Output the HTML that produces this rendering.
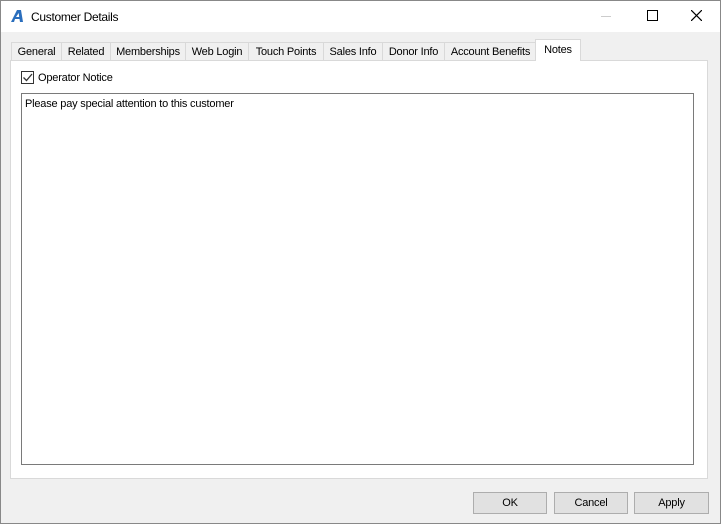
<!DOCTYPE html><html><head><style>
body{margin:0;width:721px;height:524px;overflow:hidden;font-family:"Liberation Sans",sans-serif;font-size:11px;letter-spacing:-0.2px;color:#000}
.win{position:absolute;left:0;top:0;width:719px;height:522px;border:1px solid #888;background:#f0f0f0}
.title{position:absolute;left:0;top:0;width:719px;height:31px;background:#fff}
.tab{position:absolute;top:41px;height:17px;border:1px solid #d9d9d9;border-bottom:none;background:#f0f0f0;line-height:19px;text-align:center;box-sizing:content-box}
.panel{position:absolute;left:9px;top:59px;width:696px;height:417px;background:#fff;border:1px solid #d9d9d9}
.btn{position:absolute;top:491px;height:20px;border:1px solid #adadad;background:#e1e1e1;text-align:center;line-height:21px}
</style></head><body><div class="win">
<div class="title">
<svg style="position:absolute;left:9px;top:8px" width="16" height="14" viewBox="0 0 16 14"><path d="M1 13 L7 1 L11 1 L13 13 L10 13 L9.5 10 L5 10 L4 13Z M6 8 L9.2 8 L8.7 4Z" fill="#2a6ebd" fill-rule="evenodd"/></svg>
<div style="position:absolute;left:30px;top:9px;font-size:12px;letter-spacing:-0.3px">Customer Details</div>
<div style="position:absolute;left:600px;top:15px;width:10px;height:1px;background:#ccc"></div>
<div style="position:absolute;left:646px;top:9px;width:9px;height:9px;border:1px solid #000"></div>
<svg style="position:absolute;left:690px;top:9px" width="11" height="11"><path d="M0 0L11 11M11 0L0 11" stroke="#000" stroke-width="1.2"/></svg>
</div>
<div class="panel"></div>
<div class="tab" style="left:10px;width:49px">General</div>
<div class="tab" style="left:60px;width:48px">Related</div>
<div class="tab" style="left:109px;width:74px">Memberships</div>
<div class="tab" style="left:184px;width:62px">Web Login</div>
<div class="tab" style="left:247px;width:74px">Touch Points</div>
<div class="tab" style="left:322px;width:58px">Sales Info</div>
<div class="tab" style="left:381px;width:61px">Donor Info</div>
<div class="tab" style="left:443px;width:91px">Account Benefits</div>
<div class="tab" style="left:534px;top:38px;height:21px;width:44px;background:#fff;line-height:21px;z-index:2">Notes</div>
<div style="position:absolute;left:20px;top:70px;width:11px;height:11px;border:1px solid #333;background:#fff"><svg width="11" height="11" style="position:absolute;left:0;top:0"><path d="M1.5 5.5L4.5 8.5L10 2" stroke="#333" stroke-width="1.3" fill="none"/></svg></div>
<div style="position:absolute;left:37px;top:71px">Operator Notice</div>
<div style="position:absolute;left:20px;top:92px;width:671px;height:370px;border:1px solid #7a7a7a;background:#fff"><div style="position:absolute;left:3px;top:4px">Please pay special attention to this customer</div></div>
<div class="btn" style="left:472px;width:72px">OK</div>
<div class="btn" style="left:553px;width:72px">Cancel</div>
<div class="btn" style="left:633px;width:73px">Apply</div>
</div></body></html>
